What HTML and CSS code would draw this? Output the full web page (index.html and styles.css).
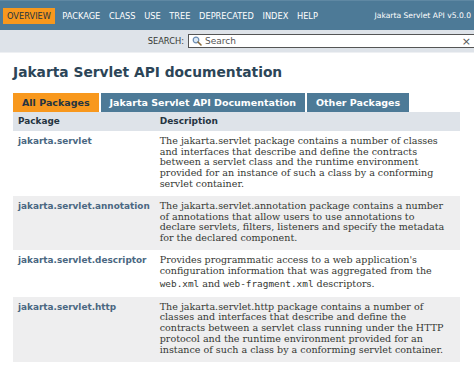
FILE: index.html
```html
<!DOCTYPE html>
<html lang="en">
<head>
  <meta charset="UTF-8" />
  <title>Overview (Jakarta Servlet API documentation)</title>
  <link rel="stylesheet" href="styles.css">
</head>
<body>
  <header>
    <nav class="top-nav">
      <ul class="nav-list">
        <li class="nav-current">Overview</li>
        <li>Package</li>
        <li>Class</li>
        <li>Use</li>
        <li>Tree</li>
        <li>Deprecated</li>
        <li>Index</li>
        <li>Help</li>
      </ul>
      <div class="about">Jakarta Servlet API v5.0.0</div>
    </nav>
    <div class="sub-nav">
      <label for="search">SEARCH:</label>
      <div class="search-box">
        <svg class="search-icon" width="10" height="10" viewBox="0 0 10 10">
          <circle cx="4" cy="4" r="2.8" fill="#dbe9f6" stroke="#6c8db3" stroke-width="1.2"/>
          <line x1="6" y1="6" x2="9" y2="9" stroke="#8a6a3a" stroke-width="1.6" stroke-linecap="round"/>
        </svg>
        <input type="text" id="search" placeholder="Search">
        <span class="reset">×</span>
      </div>
    </div>
  </header>

  <main class="content">
    <h1>Jakarta Servlet API documentation</h1>

    <div class="tabs">
      <span class="tab active">All Packages</span>
      <span class="tab">Jakarta Servlet API Documentation</span>
      <span class="tab">Other Packages</span>
    </div>

    <table class="summary">
      <thead>
        <tr>
          <th class="col-first">Package</th>
          <th>Description</th>
        </tr>
      </thead>
      <tbody>
        <tr class="row-color">
          <td class="col-first"><a href="#">jakarta.servlet</a></td>
          <td class="col-last">The jakarta.servlet package contains a number of classes and interfaces that describe and define the contracts between a servlet class and the runtime environment provided for an instance of such a class by a conforming servlet container.</td>
        </tr>
        <tr class="alt-color">
          <td class="col-first"><a href="#">jakarta.servlet.annotation</a></td>
          <td class="col-last">The jakarta.servlet.annotation package contains a number of annotations that allow users to use annotations to declare servlets, filters, listeners and specify the metadata for the declared component.</td>
        </tr>
        <tr class="row-color">
          <td class="col-first"><a href="#">jakarta.servlet.descriptor</a></td>
          <td class="col-last">Provides programmatic access to a web application's configuration information that was aggregated from the <code>web.xml</code> and <code>web-fragment.xml</code> descriptors.</td>
        </tr>
        <tr class="alt-color">
          <td class="col-first"><a href="#">jakarta.servlet.http</a></td>
          <td class="col-last">The jakarta.servlet.http package contains a number of classes and interfaces that describe and define the contracts between a servlet class running under the HTTP protocol and the runtime environment provided for an instance of such a class by a conforming servlet container.</td>
        </tr>
      </tbody>
    </table>
  </main>
</body>
</html>
```

FILE: styles.css
```css
body {
  margin: 0;
  background-color: #ffffff;
  color: #353833;
  font-family: "DejaVu Sans", Arial, sans-serif;
  font-size: 9px;
}

a {
  color: #4a6782;
  text-decoration: none;
}

.top-nav {
  display: flex;
  align-items: center;
  justify-content: space-between;
  height: 30px;
  background-color: #4d7a97;
  color: #ffffff;
  border-top: 1px solid #5f88a3;
  box-sizing: border-box;
}

.nav-list {
  display: flex;
  margin: 0;
  padding: 0;
  list-style: none;
}

.nav-list li {
  padding: 4px 4.3px;
  font-size: 8.25px;
  line-height: 8px;
  text-transform: uppercase;
}

.nav-list .nav-current {
  margin: 0 3px;
  padding: 4px 4px;
  background-color: #f8981d;
  color: #253441;
}

.about {
  font-size: 7.6px;
  padding-right: 3px;
}

.sub-nav {
  display: flex;
  align-items: center;
  justify-content: flex-end;
  height: 23px;
  background-color: #dee3e9;
  border-bottom: 1px solid #eef0f3;
  box-sizing: border-box;
}

.sub-nav label {
  font-size: 8.3px;
  margin-right: 4px;
  color: #353833;
}

.search-box {
  display: flex;
  align-items: center;
  width: 290px;
  height: 14px;
  margin-right: -4px;
  background: #ffffff;
  border: 1px solid #555555;
  box-sizing: border-box;
  padding-left: 3px;
}

.search-box input {
  flex: 1;
  border: none;
  outline: none;
  padding: 0 0 0 3px;
  height: 12px;
  font-family: "DejaVu Sans", Arial, sans-serif;
  font-size: 9px;
  background: transparent;
}

.search-box input::placeholder {
  color: #555555;
}

.reset {
  font-size: 11px;
  line-height: 11px;
  color: #555555;
  padding-right: 6px;
}

.content {
  padding: 0 14px 0 13px;
}

h1 {
  margin: 11px 0 12px;
  font-size: 13.8px;
  line-height: 17px;
  color: #2c4557;
}

.tabs {
  display: flex;
  gap: 2px;
}

.tab {
  background-color: #4d7a97;
  color: #ffffff;
  font-weight: bold;
  font-size: 9.5px;
  line-height: 11px;
  padding: 4px 9px;
}

.tab.active {
  background-color: #f8981d;
  color: #253441;
}

.summary {
  width: 100%;
  border-collapse: collapse;
}

.summary th {
  background-color: #dee3e9;
  text-align: left;
  font-size: 9px;
  line-height: 10px;
  padding: 4px 5px;
  color: #253441;
}

.summary td {
  vertical-align: top;
  padding: 5px 5px 6px;
}

.summary .col-first {
  font-weight: bold;
  font-size: 8.9px;
  line-height: 10.8px;
  white-space: nowrap;
}

.summary .col-last {
  font-family: "DejaVu Serif", Georgia, serif;
  font-size: 9.55px;
  line-height: 10.8px;
  padding-right: 7px;
}

.summary code {
  font-family: "DejaVu Sans Mono", monospace;
  font-size: 9.4px;
  line-height: 14px;
}

.row-color {
  background-color: #ffffff;
}

.alt-color {
  background-color: #eeeeef;
}
```
